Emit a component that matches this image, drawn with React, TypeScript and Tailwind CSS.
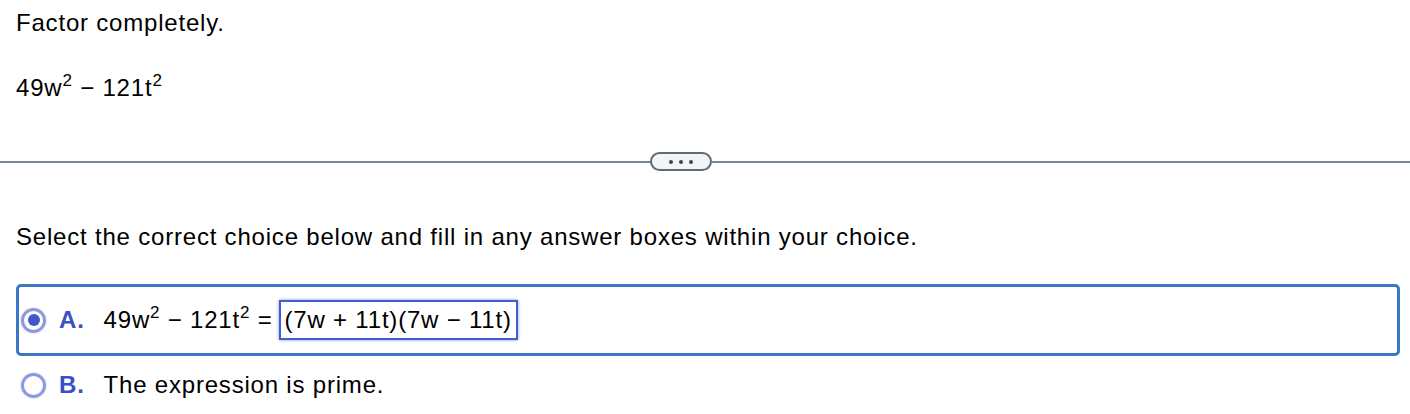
import React from "react";

function Sup({ children }: { children: React.ReactNode }) {
  return <span className="text-[17px] relative top-[-10px] leading-none">{children}</span>;
}

function Expr() {
  return (
    <span>
      49w<Sup>2</Sup> − 121t<Sup>2</Sup>
    </span>
  );
}

export default function App() {
  return (
    <div className="w-[1410px] h-[414px] bg-white text-black overflow-hidden tracking-[0.8px]" style={{ fontFamily: '"Liberation Sans", Arial, sans-serif' }}>
      <div className="pl-[16px] pr-[10px]">
        <p className="text-[24px] leading-[28px] pt-[9px]">Factor completely.</p>
        <p className="text-[24px] leading-[28px] mt-[37px]"><Expr /></p>
      </div>

      <div className="mt-[50px] flex items-center">
        <div className="w-[651px] h-[2px] bg-[#7b8693]" />
        <div className="w-[62px] h-[19px] rounded-[10px] border-2 border-[#5f6b78] bg-[#f3f4f6] flex items-center justify-center gap-[6px] mx-[-1px]">
          <span className="w-[4px] h-[4px] rounded-full bg-[#3f4650]" />
          <span className="w-[4px] h-[4px] rounded-full bg-[#3f4650]" />
          <span className="w-[4px] h-[4px] rounded-full bg-[#3f4650]" />
        </div>
        <div className="flex-1 h-[2px] bg-[#7b8693]" />
      </div>

      <div className="pl-[16px] pr-[10px]">
        <p className="text-[24px] leading-[28px] mt-[52px]">Select the correct choice below and fill in any answer boxes within your choice.</p>

        <div className="mt-[33px] h-[72px] border-[3px] border-[#3a78c3] rounded-[5px] flex items-center pl-[2px]">
          <span className="w-[25px] h-[25px] rounded-full border-[3px] border-[#8c98e0] flex items-center justify-center shadow-[0_0_2px_#b8c0ee]">
            <span className="w-[12px] h-[12px] rounded-full bg-[#4256cf]" />
          </span>
          <span className="ml-[13px] text-[24px] font-bold text-[#3b4fc7]">A.</span>
          <span className="ml-[19px] text-[24px]"><Expr /> =</span>
          <span className="ml-[6px] h-[40px] px-[4px] border-2 border-[#3f60c8] shadow-[0_0_3px_#6f8be0] flex items-center text-[24px]">(7w + 11t)(7w − 11t)</span>
        </div>

        <div className="mt-[11px] flex items-center pl-[5px]">
          <span className="w-[25px] h-[25px] rounded-full border-[3px] border-[#8c98e0] shadow-[0_0_2px_#b8c0ee]" />
          <span className="ml-[13px] text-[24px] font-bold text-[#3b4fc7]">B.</span>
          <span className="ml-[19px] text-[24px]">The expression is prime.</span>
        </div>
      </div>
    </div>
  );
}
